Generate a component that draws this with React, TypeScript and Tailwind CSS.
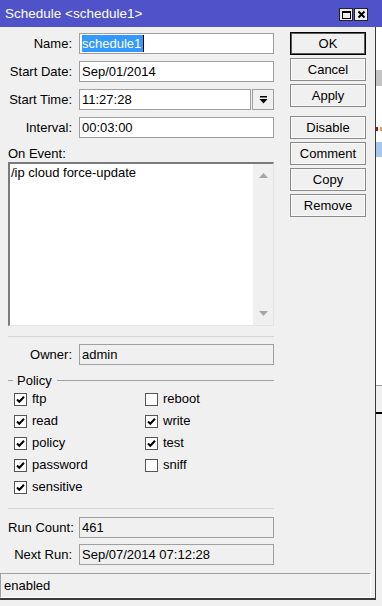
import React from "react";

function Field({ label, children, readOnly, h = "h-[21px]" }: { label: string; children: React.ReactNode; readOnly?: boolean; h?: string }) {
  return (
    <div className={`flex items-center ${h}`}>
      <div className="w-[64px] text-right whitespace-nowrap">{label}</div>
      <div
        className={`ml-[7px] w-[195px] h-full border border-[#a0a0a0] flex items-center pl-[2px] whitespace-nowrap ${
          readOnly ? "bg-[#f0f0f0]" : "bg-white"
        }`}
      >
        {children}
      </div>
    </div>
  );
}

function Btn({ children, def }: { children: React.ReactNode; def?: boolean }) {
  return (
    <div
      className={`h-[23px] w-[76px] flex items-center justify-center bg-[#f0f0f0] ${
        def ? "border border-black shadow-[inset_0_0_0_1px_#5a5a5a]" : "border border-[#8a8a8a] shadow-[inset_0_0_0_1px_#f8f8f8]"
      }`}
    >
      {children}
    </div>
  );
}

function Check({ label, checked }: { label: string; checked?: boolean }) {
  return (
    <div className="flex items-center h-[22px]">
      <div className="w-[13px] h-[13px] bg-white border border-[#555] flex items-center justify-center">
        {checked && (
          <svg width="11" height="11" viewBox="0 0 11 11">
            <path d="M2 5.5 L4.3 7.8 L9 2.8" stroke="#000" strokeWidth="2" fill="none" />
          </svg>
        )}
      </div>
      <span className="ml-[5px]">{label}</span>
    </div>
  );
}

export default function App() {
  return (
    <div className="w-[382px] h-[606px] overflow-hidden bg-[#f0f0f0] font-['Liberation_Sans',Arial,sans-serif] text-[13px] text-black flex flex-col">
      {/* Title bar */}
      <div className="h-[27px] bg-[#4f52c9] flex items-center pl-[5px] shrink-0">
        <span className="text-white text-[13.5px] leading-none">Schedule &lt;schedule1&gt;</span>
        <div className="ml-auto mr-[14px] flex gap-[1px] mt-[2px]">
          <div className="w-[14px] h-[13px] bg-[#eeeeee] border border-[#222] flex items-center justify-center">
            <div className="w-[9px] h-[8px] border border-black border-t-2" />
          </div>
          <div className="w-[14px] h-[13px] bg-[#eeeeee] border border-[#222] flex items-center justify-center">
            <svg width="9" height="9" viewBox="0 0 9 9">
              <path d="M1.5 1.5 L7.5 7.5 M7.5 1.5 L1.5 7.5" stroke="#000" strokeWidth="2" />
            </svg>
          </div>
        </div>
      </div>

      <div className="flex shrink-0">
        {/* Dialog body */}
        <div className="w-[376px] h-[573px] border-r border-b-2 border-[#3a3a3a] bg-[#f0f0f0] flex flex-col pt-[6px]">
          <div className="flex h-[532px]">
            {/* Left column */}
            <div className="ml-[8px] w-[266px] flex flex-col">
              <div className="flex flex-col gap-[7px]">
                <Field label="Name:">
                  <span className="bg-[#3399ff] text-white pr-[2px] h-[17px] leading-[17px] border-r border-black">schedule1</span>
                </Field>
                <Field label="Start Date:">Sep/01/2014</Field>
                <div className="flex items-center h-[21px]">
                  <div className="w-[64px] text-right whitespace-nowrap">Start Time:</div>
                  <div className="ml-[7px] w-[172px] h-full border border-[#a0a0a0] bg-white flex items-center pl-[2px]">11:27:28</div>
                  <div className="ml-[1px] w-[22px] h-full border border-[#a0a0a0] bg-[#f0f0f0] flex items-center justify-center">
                    <svg width="9" height="8" viewBox="0 0 9 8">
                      <rect x="1" y="0" width="7" height="1.5" fill="#000" />
                      <path d="M0.5 3 L8.5 3 L4.5 7.5 Z" fill="#000" />
                    </svg>
                  </div>
                </div>
                <Field label="Interval:">00:03:00</Field>
              </div>

              <div className="mt-[8px] h-[16px] leading-[16px]">On Event:</div>
              <div className="h-[164px] w-[266px] bg-white border-t-2 border-l-2 border-t-[#7a7a7a] border-l-[#7a7a7a] border-r border-b border-r-[#e3e3e3] border-b-[#e3e3e3] flex">
                <div className="flex-1 pl-[1px] pt-[1px] leading-[15px]">/ip cloud force-update</div>
                <div className="w-[20px] h-full bg-[#f0f0f0] flex flex-col items-center justify-between py-[9px]">
                  <svg width="9" height="5" viewBox="0 0 9 5">
                    <path d="M0 5 L4.5 0 L9 5 Z" fill="#a6a6a6" />
                  </svg>
                  <svg width="9" height="5" viewBox="0 0 9 5">
                    <path d="M0 0 L4.5 5 L9 0 Z" fill="#a6a6a6" />
                  </svg>
                </div>
              </div>

              <div className="mt-[10px] h-px w-[266px] bg-[#d5d5d5]" />
              <div className="mt-[7px]">
                <Field label="Owner:" readOnly>
                  admin
                </Field>
              </div>

              <div className="mt-[8px] h-[15px] flex items-center">
                <div className="w-[5px] h-px bg-[#a0a0a0]" />
                <span className="ml-[4px] leading-[15px]">Policy</span>
                <div className="ml-[5px] flex-1 h-px bg-[#a0a0a0]" />
              </div>

              <div className="flex pl-[6px]">
                <div className="w-[131px] flex flex-col">
                  <Check label="ftp" checked />
                  <Check label="read" checked />
                  <Check label="policy" checked />
                  <Check label="password" checked />
                  <Check label="sensitive" checked />
                </div>
                <div className="flex flex-col">
                  <Check label="reboot" />
                  <Check label="write" checked />
                  <Check label="test" checked />
                  <Check label="sniff" />
                </div>
              </div>

              <div className="mt-[10px] h-px w-[266px] bg-[#d5d5d5]" />
              <div className="mt-[8px] flex flex-col gap-[6px]">
                <Field label="Run Count:" readOnly>
                  461
                </Field>
                <Field label="Next Run:" readOnly>
                  Sep/07/2014 07:12:28
                </Field>
              </div>
            </div>

            {/* Right column buttons */}
            <div className="ml-[16px] mt-[-1px] flex flex-col w-[76px]">
              <div className="flex flex-col gap-[3px]">
                <Btn def>OK</Btn>
                <Btn>Cancel</Btn>
                <Btn>Apply</Btn>
              </div>
              <div className="mt-[9px] flex flex-col gap-[3px]">
                <Btn>Disable</Btn>
                <Btn>Comment</Btn>
                <Btn>Copy</Btn>
                <Btn>Remove</Btn>
              </div>
            </div>
          </div>

          {/* Status bar */}
          <div className="mt-[8px] h-[25px] w-[371px] border-t border-l border-[#a0a0a0] border-r border-b border-r-white border-b-white flex items-center pl-[3px]">
            enabled
          </div>
        </div>

        {/* Background window strip */}
        <div className="w-[6px] h-[573px] flex flex-col bg-white">
          <div className="h-[43px] bg-white" />
          <div className="h-[16px] bg-[#c4c4c4]" />
          <div className="h-[41px] bg-white" />
          <div className="h-[4px] flex">
            <div className="w-[2px] bg-[#8a1a3a]" />
            <div className="w-[2px]" />
            <div className="w-[2px] bg-[#e8a040]" />
          </div>
          <div className="h-[11px] bg-white" />
          <div className="h-[15px] bg-[#a9c6ec]" />
          <div className="h-[228px] bg-white" />
          <div className="h-px bg-[#a0a0a0]" />
          <div className="h-[26px] bg-[#f0f0f0]" />
          <div className="h-[2px] bg-black" />
          <div className="flex-1 bg-[#f0f0f0]" />
        </div>
      </div>
      <div className="flex-1 bg-[#f0f0f0]" />
    </div>
  );
}
